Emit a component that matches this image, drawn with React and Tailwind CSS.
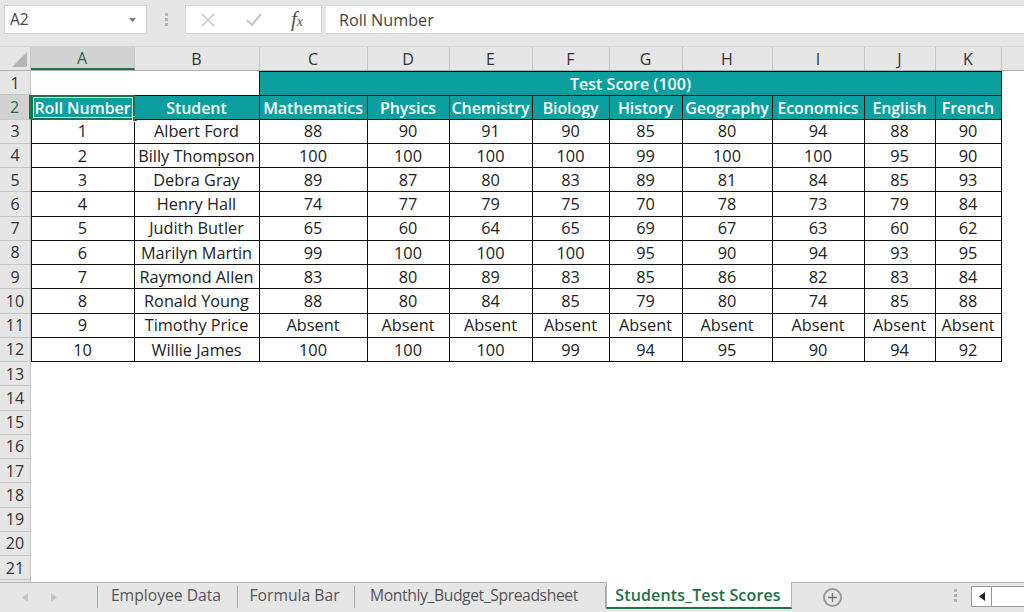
import React from "react";

const colW = ["w-[104px]","w-[125px]","w-[108px]","w-[82px]","w-[83px]","w-[77px]","w-[73px]","w-[90px]","w-[92px]","w-[71px]","w-[66px]"];
const letters = "ABCDEFGHIJK".split("");
const heads = ["Roll Number","Student","Mathematics","Physics","Chemistry","Biology","History","Geography","Economics","English","French"];
const rows = [
  [1,"Albert Ford",88,90,91,90,85,80,94,88,90],
  [2,"Billy Thompson",100,100,100,100,99,100,100,95,90],
  [3,"Debra Gray",89,87,80,83,89,81,84,85,93],
  [4,"Henry Hall",74,77,79,75,70,78,73,79,84],
  [5,"Judith Butler",65,60,64,65,69,67,63,60,62],
  [6,"Marilyn Martin",99,100,100,100,95,90,94,93,95],
  [7,"Raymond Allen",83,80,89,83,85,86,82,83,84],
  [8,"Ronald Young",88,80,84,85,79,80,74,85,88],
  [9,"Timothy Price",...Array(9).fill("Absent")],
  [10,"Willie James",100,100,100,99,94,95,90,94,92],
];
const rowNum = Array.from({length:21},(_,i)=>i+1);

function RowHead({n, active}) {
  return (
    <div className={`h-[24.25px] w-[31px] shrink-0 flex items-center justify-center border-b border-[#c6c6c6] text-[16px] ${active ? "bg-[#d2d2d2] text-[#1f6e43] border-r-2 border-r-[#1f7246]" : "bg-[#e6e6e6] text-[#333] border-r border-r-[#c6c6c6]"}`}>{n}</div>
  );
}

export default function App() {
  return (
    <div className="w-[1024px] h-[612px] overflow-hidden flex flex-col bg-white font-['Open_Sans',sans-serif] text-[#222]">
      {/* formula bar */}
      <div className="h-[47px] shrink-0 bg-[#e6e6e6] flex items-start pt-[5px] border-b border-[#d4d4d4]">
        <div className="ml-[4px] w-[143px] h-[29px] bg-white border border-[#d4d4d4] flex items-center justify-between pl-[5px] pr-[10px] text-[15.5px] text-[#444]">
          <span>A2</span>
          <svg width="7" height="4" viewBox="0 0 7 4"><path d="M0 0h7L3.5 4z" fill="#777"/></svg>
        </div>
        <div className="w-[38px] h-[29px] flex flex-col items-center justify-center gap-[2px]">
          <i className="w-[3px] h-[3px] bg-[#b4b4b4]"/><i className="w-[3px] h-[3px] bg-[#b4b4b4]"/><i className="w-[3px] h-[3px] bg-[#b4b4b4]"/>
        </div>
        <div className="w-[137px] h-[29px] bg-white border border-[#d4d4d4] flex items-center pl-[15px]">
          <svg width="14" height="14" viewBox="0 0 14 14" className="mr-[31px]"><path d="M1 1l12 12M13 1L1 13" stroke="#c8c8c8" strokeWidth="1.6" fill="none"/></svg>
          <svg width="16" height="13" viewBox="0 0 16 13" className="mr-[29px]"><path d="M1 7l5 5L15 1" stroke="#c8c8c8" strokeWidth="2.2" fill="none"/></svg>
          <span className="font-['Liberation_Serif',serif] italic text-[21px] text-[#555] leading-none">f<span className="text-[14px]">x</span></span>
        </div>
        <div className="ml-[4px] flex-1 h-[29px] bg-white border-y border-[#d4d4d4] flex items-center pl-[13px] pt-[1px] text-[16.2px] text-[#444]">Roll Number</div>
      </div>

      {/* column headers */}
      <div className="h-[24px] shrink-0 flex bg-[#e6e6e6] border-b border-[#b0b0b0] text-[16px] text-[#333]">
        <div className="w-[31px] shrink-0 relative border-r border-[#c6c6c6]">
          <svg width="15" height="15" viewBox="0 0 15 15" className="absolute right-[3px] bottom-[3px]"><path d="M15 0v15H0z" fill="#b4b4b4"/></svg>
        </div>
        {letters.map((l,i)=>(
          <div key={l} className={`${colW[i]} shrink-0 flex items-center justify-center pr-[1px] border-r border-[#c6c6c6] ${i===0 ? "bg-[#d2d2d2] text-[#1f6e43] border-b-2 border-b-[#1f7246]" : ""}`}>{l}</div>
        ))}
      </div>

      {/* sheet */}
      <div className="flex flex-1 min-h-0 overflow-hidden">
        <div className="w-[31px] shrink-0 flex flex-col bg-[#e6e6e6]">
          {rowNum.map(n=><RowHead key={n} n={n} active={n===2}/>)}
          <div className="flex-1 border-r border-[#c6c6c6]"/>
        </div>
        <div className="flex-1 min-w-0 flex flex-col text-[16.3px]">
          <div className="flex h-[24.25px] shrink-0">
            <div className="w-[228px] shrink-0"/>
            <div className="w-[743px] shrink-0 bg-[#0ba09f] text-white font-semibold flex items-center justify-center text-[16px] border border-b-0 border-[#111]">Test Score (100)</div>
          </div>
          <div className="flex h-[24.25px] shrink-0">
            {heads.map((h,i)=>(
              <div key={h} className={`${colW[i]} shrink-0 relative bg-[#0ba09f] text-white font-semibold text-[16px] tracking-[-0.1px] flex items-center justify-center pt-[1px] pr-[1px] whitespace-nowrap border-y border-[#111] ${i>=1 ? "border-r" : ""}`}>
                {h}
                {i===0 && <>
                  <div className="absolute inset-0 -top-px -bottom-px border-2 border-[#1f7246] outline outline-1 outline-offset-[-3px] outline-[#bfe8e4]"/>
                  <div className="absolute -right-[3px] -bottom-[3px] w-[6px] h-[6px] bg-[#1f7246] border border-white"/>
                </>}
              </div>
            ))}
          </div>
          {rows.map((r,ri)=>(
            <div key={ri} className="flex h-[24.25px] shrink-0">
              {r.map((c,i)=>(
                <div key={i} className={`${colW[i]} shrink-0 flex items-center justify-center pt-[1px] pr-[1px] whitespace-nowrap border-r border-b border-[#111] ${i===0 ? "border-l" : ""}`}>{c}</div>
              ))}
            </div>
          ))}
        </div>
      </div>

      {/* tabs */}
      <div className="h-[30px] shrink-0 bg-[#e6e6e6] border-t border-[#b4b4b4] flex items-start text-[15.7px] text-[#555]">
        <div className="w-[98px] h-[22px] mt-[3px] flex items-center pl-[22px] gap-[23px] border-r border-[#a8a8a8]">
          <svg width="6" height="9" viewBox="0 0 6 9"><path d="M6 0v9L0 4.5z" fill="#c4c4c4"/></svg>
          <svg width="6" height="9" viewBox="0 0 6 9"><path d="M0 0v9l6-4.5z" fill="#c4c4c4"/></svg>
        </div>
        {["Employee Data","Formula Bar"].map((t,i)=>(
          <div key={t} className={`h-[22px] mt-[3px] pb-[3px] pr-[3px] flex items-center justify-center border-r border-[#a8a8a8] ${["w-[140px]","w-[117px]"][i]}`}>{t}</div>
        ))}
        <div className="w-[251px] h-[22px] mt-[3px] pb-[3px] pr-[12px] flex items-center justify-center border-r border-[#a8a8a8] tracking-[-0.4px]">Monthly_Budget_Spreadsheet</div>
        <div className="w-[186px] h-[27px] -mt-px pr-[2px] bg-white border-x border-[#b4b4b4] border-b-2 border-b-[#1f7246] flex items-center justify-center font-semibold text-[#1f6e43] text-[16px] tracking-[0.15px]">Students_Test Scores</div>
        <div className="ml-[31px] mt-[5px] w-[19px] h-[19px] rounded-full border-2 border-[#999] flex items-center justify-center">
          <svg width="9" height="9" viewBox="0 0 9 9"><path d="M4.5 0v9M0 4.5h9" stroke="#777" strokeWidth="1.4"/></svg>
        </div>
        <div className="ml-[112px] mt-[6px] flex flex-col gap-[2px]">
          <i className="w-[3px] h-[3px] bg-[#b4b4b4]"/><i className="w-[3px] h-[3px] bg-[#b4b4b4]"/><i className="w-[3px] h-[3px] bg-[#b4b4b4]"/>
        </div>
        <div className="ml-[14px] mt-[3px] w-[21px] h-[21px] bg-white border border-[#999] flex items-center justify-center">
          <svg width="6" height="9" viewBox="0 0 6 9"><path d="M6 0v9L0 4.5z" fill="#222"/></svg>
        </div>
        <div className="mt-[3px] flex-1 h-[21px] bg-white border-y border-[#999]"/>
      </div>
    </div>
  );
}
